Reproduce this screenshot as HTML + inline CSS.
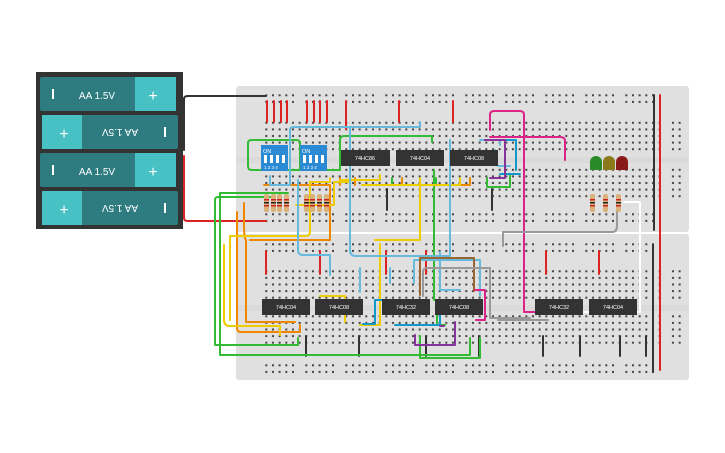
<!DOCTYPE html>
<html><head><meta charset="utf-8"><style>
html,body{margin:0;padding:0;background:#fff;width:725px;height:453px;overflow:hidden}
svg{display:block}
text{font-family:"Liberation Sans",sans-serif}
</style></head><body>
<svg width="725" height="453" viewBox="0 0 725 453" xmlns="http://www.w3.org/2000/svg">
<defs>
<pattern id="h" x="263" y="119.5" width="6.667" height="6.6" patternUnits="userSpaceOnUse"><rect x="2.3" y="2.3" width="2" height="2" fill="#444"/></pattern>
<pattern id="h2" x="263" y="166.5" width="6.667" height="6.6" patternUnits="userSpaceOnUse"><rect x="2.3" y="2.3" width="2" height="2" fill="#444"/></pattern>
<pattern id="h3" x="263" y="268" width="6.667" height="6.6" patternUnits="userSpaceOnUse"><rect x="2.3" y="2.3" width="2" height="2" fill="#444"/></pattern>
<pattern id="h4" x="263" y="313" width="6.667" height="6.6" patternUnits="userSpaceOnUse"><rect x="2.3" y="2.3" width="2" height="2" fill="#444"/></pattern>
<pattern id="r1" x="263" y="92" width="40" height="6.6" patternUnits="userSpaceOnUse"><rect x="2.3" y="2.3" width="2" height="2" fill="#444"/><rect x="9" y="2.3" width="2" height="2" fill="#444"/><rect x="15.6" y="2.3" width="2" height="2" fill="#444"/><rect x="22.3" y="2.3" width="2" height="2" fill="#444"/><rect x="29" y="2.3" width="2" height="2" fill="#444"/></pattern>
<pattern id="r2" x="263" y="211" width="40" height="6.6" patternUnits="userSpaceOnUse"><rect x="2.3" y="2.3" width="2" height="2" fill="#444"/><rect x="9" y="2.3" width="2" height="2" fill="#444"/><rect x="15.6" y="2.3" width="2" height="2" fill="#444"/><rect x="22.3" y="2.3" width="2" height="2" fill="#444"/><rect x="29" y="2.3" width="2" height="2" fill="#444"/></pattern>
<pattern id="r3" x="263" y="241" width="40" height="6.6" patternUnits="userSpaceOnUse"><rect x="2.3" y="2.3" width="2" height="2" fill="#444"/><rect x="9" y="2.3" width="2" height="2" fill="#444"/><rect x="15.6" y="2.3" width="2" height="2" fill="#444"/><rect x="22.3" y="2.3" width="2" height="2" fill="#444"/><rect x="29" y="2.3" width="2" height="2" fill="#444"/></pattern>
<pattern id="r4" x="263" y="362" width="40" height="6.6" patternUnits="userSpaceOnUse"><rect x="2.3" y="2.3" width="2" height="2" fill="#444"/><rect x="9" y="2.3" width="2" height="2" fill="#444"/><rect x="15.6" y="2.3" width="2" height="2" fill="#444"/><rect x="22.3" y="2.3" width="2" height="2" fill="#444"/><rect x="29" y="2.3" width="2" height="2" fill="#444"/></pattern>
</defs>
<rect x="236" y="86" width="453" height="146" rx="3" fill="#e0e0e0"/>
<rect x="236" y="234" width="453" height="146" rx="3" fill="#e0e0e0"/>
<rect x="236" y="157" width="453" height="6" fill="#dadada"/>
<rect x="236" y="305" width="453" height="6" fill="#dadada"/>
<rect x="263" y="119.5" width="400" height="33" fill="url(#h)"/>
<rect x="263" y="166.5" width="400" height="33" fill="url(#h2)"/>
<rect x="263" y="268" width="400" height="33" fill="url(#h3)"/>
<rect x="263" y="313" width="400" height="33" fill="url(#h4)"/>
<rect x="263" y="92" width="400" height="13.2" fill="url(#r1)"/>
<rect x="263" y="211" width="400" height="13.2" fill="url(#r2)"/>
<rect x="263" y="241" width="400" height="13.2" fill="url(#r3)"/>
<rect x="263" y="362" width="400" height="13.2" fill="url(#r4)"/>
<rect x="670" y="119.5" width="14" height="33" fill="url(#h)"/>
<rect x="670" y="166.5" width="14" height="33" fill="url(#h2)"/>
<rect x="670" y="268" width="14" height="33" fill="url(#h3)"/>
<rect x="670" y="313" width="14" height="33" fill="url(#h4)"/>
<rect x="36" y="72" width="147" height="157" fill="#333"/>
<g>
<rect x="40" y="77" width="136" height="34" rx="2" fill="#2e7b80"/><rect x="135" y="77" width="41" height="34" fill="#48c1c4"/>
<text x="97" y="99" font-size="10" fill="#fff" text-anchor="middle">AA 1.5V</text><text x="153" y="101" font-size="16" fill="#fff" text-anchor="middle">+</text><rect x="52" y="89" width="2" height="10" fill="#fff"/>
<rect x="42" y="115" width="136" height="34" rx="2" fill="#2e7b80"/><rect x="42" y="115" width="40" height="34" fill="#48c1c4"/>
<text x="120" y="137" font-size="10" fill="#fff" text-anchor="middle" transform="rotate(180 120 133)">AA 1.5V</text><text x="64" y="139" font-size="16" fill="#fff" text-anchor="middle">+</text><rect x="164" y="127" width="2" height="10" fill="#fff"/>
<rect x="40" y="153" width="136" height="34" rx="2" fill="#2e7b80"/><rect x="135" y="153" width="41" height="34" fill="#48c1c4"/>
<text x="97" y="175" font-size="10" fill="#fff" text-anchor="middle">AA 1.5V</text><text x="153" y="177" font-size="16" fill="#fff" text-anchor="middle">+</text><rect x="52" y="165" width="2" height="10" fill="#fff"/>
<rect x="42" y="191" width="136" height="34" rx="2" fill="#2e7b80"/><rect x="42" y="191" width="40" height="34" fill="#48c1c4"/>
<text x="120" y="213" font-size="10" fill="#fff" text-anchor="middle" transform="rotate(180 120 209)">AA 1.5V</text><text x="64" y="215" font-size="16" fill="#fff" text-anchor="middle">+</text><rect x="164" y="203" width="2" height="10" fill="#fff"/>
</g>
<g fill="none" stroke-width="2" stroke-linejoin="round" stroke-linecap="round">
<path d="M184 150 V99 Q184 96 188 96 H266" stroke="#333"/>
<path d="M184 156 V218 Q184 221 188 221 H266" stroke="#d22"/>
<path d="M267 101V122M274 101V122M281 101V122M287 101V122M307 101V122M314 101V122M320 101V122M327 101V122M346 101V129M399 101V122M453 101V122M426 251V274M266 251V274M320 251V274M386 251V274M546 251V274M599 251V274M660 95V370" stroke="#d22"/>
<path d="M387 189V210M434 189V210M492 189V210M654 95V230M653 245V372M306 336V356M359 336V356M426 336V356M479 336V356M543 336V356M580 336V356M620 336V356M646 336V356" stroke="#333"/>
<path d="M248 143V166Q248 170 252 170H300V143Q300 140 296 140H252Q248 140 248 143" stroke="#3b3"/>
<path d="M290 170H340V140Q340 136 344 136H432V142" stroke="#3b3"/>
<path d="M215 345V200Q215 197 218 197H270M220 355V193H288M215 345H298V338M220 355H470V338M420 336V358H480V338" stroke="#3b3"/>
<path d="M392 178V185H436V178M434 170V300M437 310V325H445" stroke="#3b3"/>
<path d="M487 178V187H510V175" stroke="#3b3"/>
<path d="M237 212V328Q237 332 241 332H300V325M244 203V222Q244 240 246 240V322H295M264 185H330V240H250" stroke="#e80"/>
<path d="M355 185V178M340 185V178M402 185V178M390 185H470V178" stroke="#e80"/>
<path d="M224 245V320Q224 326 230 326H280V335M230 236H305Q310 236 310 232V182H330V178M230 236V320" stroke="#ec0"/>
<path d="M296 205H334V182H350M340 180H380V175M362 185H460V178M320 296H345V322M380 250V325H360" stroke="#ec0"/>
<path d="M380 244V300M375 240H420V178" stroke="#ec0"/>
<path d="M270 176V185H290V130Q290 127 294 127H420V122M298 180V250Q298 255 303 255H330V275M350 127H350V250Q350 256 356 256H450V140" stroke="#6bd"/>
<path d="M414 283V260H480V296M440 252V290H460M360 292V268M390 268V283" stroke="#6bd"/>
<path d="M480 140H500V145M495 150V160Q495 166 500 166H510" stroke="#6bd"/>
<path d="M363 324H375V300H386M395 325H440V315M500 174H520M503 140H516V170" stroke="#19c"/>
<path d="M420 295V258H474V291" stroke="#963"/>
<path d="M415 335V345H455V322M440 326H444M485 140H505V178H490" stroke="#839"/>
<path d="M490 130V115Q490 111 494 111H520Q524 111 524 115V312H538M490 137H560Q565 137 565 141V160M475 290H485V320H476" stroke="#d28"/>
<path d="M423 296V272Q423 268 427 268H490V318H530M617 208V226Q617 232 612 232H503V246M498 320H548" stroke="#999"/>
<path d="M624 202H640V312H556" stroke="#fff"/>
</g>
<g>
<rect x="261" y="145" width="27" height="26" fill="#2a8ad4"/><text x="263" y="153" font-size="5.5" fill="#fff">ON</text>
<rect x="264" y="155" width="3" height="8" fill="#fff"/><rect x="270" y="155" width="3" height="8" fill="#fff"/><rect x="276" y="155" width="3" height="8" fill="#fff"/><rect x="282" y="155" width="3" height="8" fill="#fff"/>
<text x="264" y="169" font-size="4.5" fill="#fff">1 2 3 4</text>
<rect x="300" y="145" width="27" height="26" fill="#2a8ad4"/><text x="302" y="153" font-size="5.5" fill="#fff">ON</text>
<rect x="303" y="155" width="3" height="8" fill="#fff"/><rect x="309" y="155" width="3" height="8" fill="#fff"/><rect x="315" y="155" width="3" height="8" fill="#fff"/><rect x="321" y="155" width="3" height="8" fill="#fff"/>
<text x="303" y="169" font-size="4.5" fill="#fff">1 2 3 4</text>
</g>
<g font-size="5.5" fill="#fff" text-anchor="middle">
<rect x="341" y="150" width="49" height="16" fill="#333"/><text x="365" y="160">74HC86</text>
<rect x="396" y="150" width="48" height="16" fill="#333"/><text x="420" y="160">74HC04</text>
<rect x="450" y="150" width="48" height="16" fill="#333"/><text x="474" y="160">74HC08</text>
<rect x="262" y="299" width="48" height="16" fill="#333"/><text x="286" y="309">74HC04</text>
<rect x="315" y="299" width="48" height="16" fill="#333"/><text x="339" y="309">74HC08</text>
<rect x="382" y="299" width="48" height="16" fill="#333"/><text x="406" y="309">74HC32</text>
<rect x="435" y="299" width="48" height="16" fill="#333"/><text x="459" y="309">74HC08</text>
<rect x="535" y="299" width="48" height="16" fill="#333"/><text x="559" y="309">74HC32</text>
<rect x="589" y="299" width="48" height="16" fill="#333"/><text x="613" y="309">74HC04</text>
</g>
<g>
<g id="res"><rect x="264" y="194" width="5" height="18" rx="2" fill="#d9b27a"/><rect x="264" y="199" width="5" height="1.5" fill="#c22"/><rect x="264" y="202" width="5" height="1.5" fill="#222"/><rect x="264" y="205" width="5" height="1.5" fill="#c22"/></g>
<use href="#res" x="7"/><use href="#res" x="13"/><use href="#res" x="20"/>
<use href="#res" x="40"/><use href="#res" x="46"/><use href="#res" x="53"/><use href="#res" x="60"/>
<use href="#res" x="326"/><use href="#res" x="339"/><use href="#res" x="352"/>
</g>
<circle cx="596" cy="162" r="6" fill="#2a8a2a"/><rect x="590" y="162" width="12" height="8" fill="#2a8a2a"/>
<circle cx="609" cy="162" r="6" fill="#8a7a1a"/><rect x="603" y="162" width="12" height="8" fill="#8a7a1a"/>
<circle cx="622" cy="162" r="6" fill="#8a1a1a"/><rect x="616" y="162" width="12" height="8" fill="#8a1a1a"/>
</svg>
</body></html>
